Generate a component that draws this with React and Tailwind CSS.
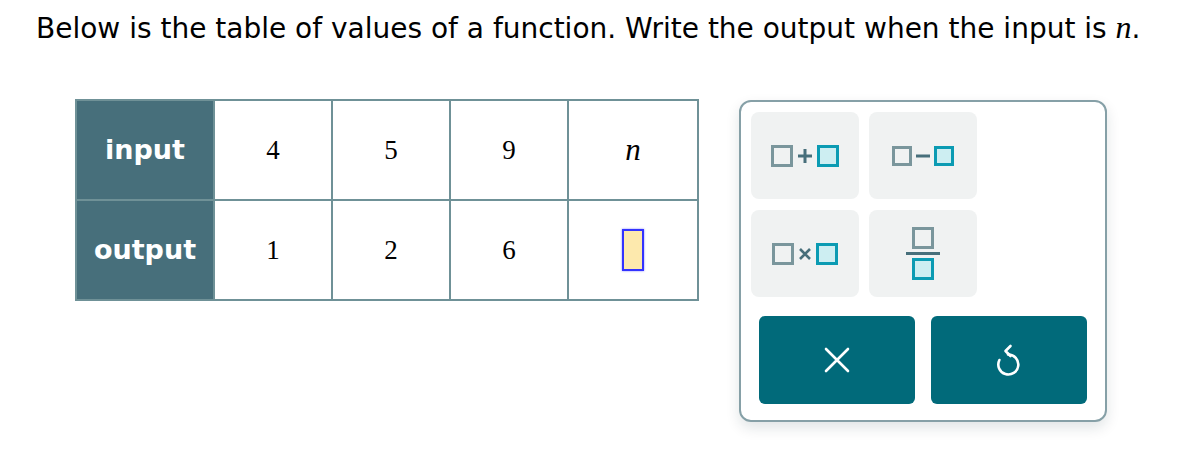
import React from "react";

const GRAY = "#7a969c";
const BLUE = "#0b9bb3";
const BLUEFILL = "#cdeef2";
const OP = "#476f7b";

function Sq({ size = 22, blue = false }) {
  return (
    <span
      className="inline-block box-border"
      style={{
        width: size,
        height: size,
        border: `3px solid ${blue ? BLUE : GRAY}`,
        background: blue ? BLUEFILL : "transparent",
      }}
    />
  );
}

function PadBtn({ children }) {
  return (
    <div className="w-[108px] h-[87px] rounded-[8px] bg-[#f0f2f2] flex items-center justify-center">
      {children}
    </div>
  );
}

export default function App() {
  const serif = { fontFamily: '"Liberation Serif", "Times New Roman", serif' };
  return (
    <div className="w-[1179px] h-[471px] bg-white relative" style={{ fontFamily: '"DejaVu Sans", Verdana, sans-serif' }}>
      <div className="pl-[36px] pt-[9px] text-[28px] leading-[36px] text-black whitespace-nowrap">
        Below is the table of values of a function. Write the output when the input is{" "}
        <span className="italic text-[32px]" style={serif}>n</span>.
      </div>
      <div className="flex items-start mt-[52px] pl-[75px]">
        <div className="grid grid-cols-[136px_116px_116px_116px_128px] grid-rows-[98px_98px] gap-[2px] p-[2px] bg-[#6f9197]">
          <div className="bg-[#476f7b] text-white font-bold text-[27px] flex items-center justify-center">input</div>
          {["4", "5", "9"].map((v) => (
            <div key={v} className="bg-white flex items-center justify-center text-[27px] text-black" style={serif}>{v}</div>
          ))}
          <div className="bg-white flex items-center justify-center text-[31px] italic text-black" style={serif}>n</div>
          <div className="bg-[#476f7b] text-white font-bold text-[27px] flex items-center justify-center">output</div>
          {["1", "2", "6"].map((v) => (
            <div key={v} className="bg-white flex items-center justify-center text-[27px] text-black" style={serif}>{v}</div>
          ))}
          <div className="bg-white flex items-center justify-center">
            <div className="w-[22px] h-[42px] bg-[#fde9ad] border-[2px] border-[#3333ff] box-border shadow-[0_0_2px_#8888ff]" />
          </div>
        </div>
        <div className="ml-[40px] mt-[1px] w-[368px] h-[322px] border-[2px] border-[#86a0a7] rounded-[12px] bg-white shadow-[0_6px_14px_rgba(0,40,50,0.12)] box-border flex flex-col">
          <div className="pt-[10px] pl-[10px] flex flex-col gap-[11px]">
            <div className="flex gap-[10px]">
              <PadBtn>
                <div className="flex items-center gap-[4px]">
                  <Sq />
                  <svg width="16" height="16" viewBox="0 0 16 16"><path d="M8 1v14M1 8h14" stroke={OP} strokeWidth="3" /></svg>
                  <Sq blue />
                </div>
              </PadBtn>
              <PadBtn>
                <div className="flex items-center gap-[4px]">
                  <Sq size={20} />
                  <svg width="14" height="14" viewBox="0 0 14 14"><path d="M0 7h14" stroke={OP} strokeWidth="3" /></svg>
                  <Sq size={20} blue />
                </div>
              </PadBtn>
            </div>
            <div className="flex gap-[10px]">
              <PadBtn>
                <div className="flex items-center gap-[5px]">
                  <Sq />
                  <svg width="12" height="12" viewBox="0 0 12 12"><path d="M1 1l10 10M11 1L1 11" stroke={OP} strokeWidth="2.6" /></svg>
                  <Sq blue />
                </div>
              </PadBtn>
              <PadBtn>
                <div className="flex flex-col items-center gap-[3px]">
                  <Sq />
                  <div className="w-[34px] h-[3px] bg-[#476f7b]" />
                  <Sq blue />
                </div>
              </PadBtn>
            </div>
          </div>
          <div className="flex gap-[16px] pl-[18px] mt-[19px]">
            <div className="w-[156px] h-[88px] rounded-[6px] bg-[#016a7a] flex items-center justify-center">
              <svg width="26" height="26" viewBox="0 0 26 26"><path d="M2 2l22 22M24 2L2 24" stroke="white" strokeWidth="2.6" strokeLinecap="round" /></svg>
            </div>
            <div className="w-[156px] h-[88px] rounded-[6px] bg-[#016a7a] flex items-center justify-center">
              <svg width="26" height="34" viewBox="0 0 26 34" fill="none" stroke="white" strokeWidth="2.6" strokeLinecap="round" strokeLinejoin="round">
                <path d="M12 11.5 A10 10 0 1 1 3.4 17" />
                <path d="M14.5 3 L9.5 8 L14.5 13" />
              </svg>
            </div>
          </div>
        </div>
      </div>
    </div>
  );
}
